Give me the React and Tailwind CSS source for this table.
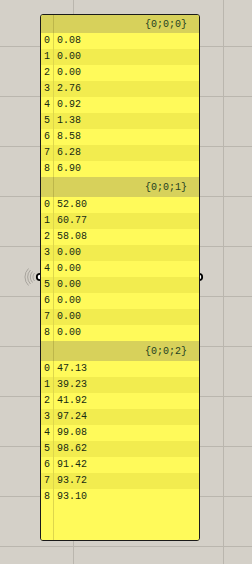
import React from "react";

const groups = [
  { path: "{0;0;0}", vals: ["0.08", "0.00", "0.00", "2.76", "0.92", "1.38", "8.58", "6.28", "6.90"], h: "h-[18px]" },
  { path: "{0;0;1}", vals: ["52.80", "60.77", "58.08", "0.00", "0.00", "0.00", "0.00", "0.00", "0.00"], h: "h-[20px]" },
  { path: "{0;0;2}", vals: ["47.13", "39.23", "41.92", "97.24", "99.08", "98.62", "91.42", "93.72", "93.10"], h: "h-[20px]" },
];

function Header({ path, h }) {
  return (
    <div className={`flex ${h} bg-[#d7d15b] shrink-0`}>
      <div className="w-[13px] border-r border-[#bdb64a] shrink-0" />
      <div className="flex-1 flex items-center justify-end pr-[12px] text-[#24401f]">{path}</div>
    </div>
  );
}

function Row({ i, v }) {
  const alt = i % 2 === 1;
  return (
    <div className={`flex h-[16px] shrink-0 ${alt ? "bg-[#f2ec4f]" : "bg-[#fffa5a]"}`}>
      <div className="w-[13px] border-r border-[#ddd64c] shrink-0 pl-[3px] leading-[16px]">{i}</div>
      <div className="flex-1 pl-[3px] leading-[16px]">{v}</div>
    </div>
  );
}

export default function App() {
  return (
    <div className="relative w-[252px] h-[564px] overflow-hidden bg-[#d4d0c8] bg-[repeating-linear-gradient(to_bottom,transparent_0px,transparent_46px,#bab6ae_46px,#bab6ae_47px,transparent_47px,transparent_50px),repeating-linear-gradient(to_right,transparent_0px,transparent_73px,#bab6ae_73px,#bab6ae_74px,transparent_74px,transparent_150px)] pt-[14px] pl-[40px]">
      {/* input grip */}
      <svg className="absolute left-[20px] top-[265px]" width="24" height="24" viewBox="0 0 24 24">
        <g fill="none" stroke="#9c9892" strokeWidth="0.8">
          <path d="M 14.5 8 A 6 6 0 0 0 14.5 16" />
          <path d="M 12.5 6.5 A 8 8 0 0 0 12.5 17.5" />
          <path d="M 10.5 5 A 10 10 0 0 0 10.5 19" />
          <path d="M 8.5 3.5 A 12 12 0 0 0 8.5 20.5" />
        </g>
        <circle cx="20" cy="12" r="3.2" fill="#ffffff" stroke="#000000" strokeWidth="1.8" />
      </svg>
      {/* output grip */}
      <svg className="absolute left-[193px] top-[271px]" width="12" height="12" viewBox="0 0 12 12">
        <circle cx="6" cy="6" r="3.2" fill="#ffffff" stroke="#000000" strokeWidth="1.8" />
      </svg>
      <div className="relative z-10 w-[160px] h-[527px] border border-[#1a1a1a] rounded-[3px] bg-[#fffa5a] overflow-hidden flex flex-col font-['Liberation_Mono',monospace] text-[10px] text-[#162a12]">
        {groups.map((g, gi) => (
          <React.Fragment key={gi}>
            <Header path={g.path} h={g.h} />
            {g.vals.map((v, i) => (
              <Row key={i} i={i} v={v} />
            ))}
          </React.Fragment>
        ))}
        <div className="flex flex-1 bg-[#fffa5a]">
          <div className="w-[13px] border-r border-[#ddd64c] shrink-0" />
          <div className="flex-1" />
        </div>
      </div>
    </div>
  );
}
